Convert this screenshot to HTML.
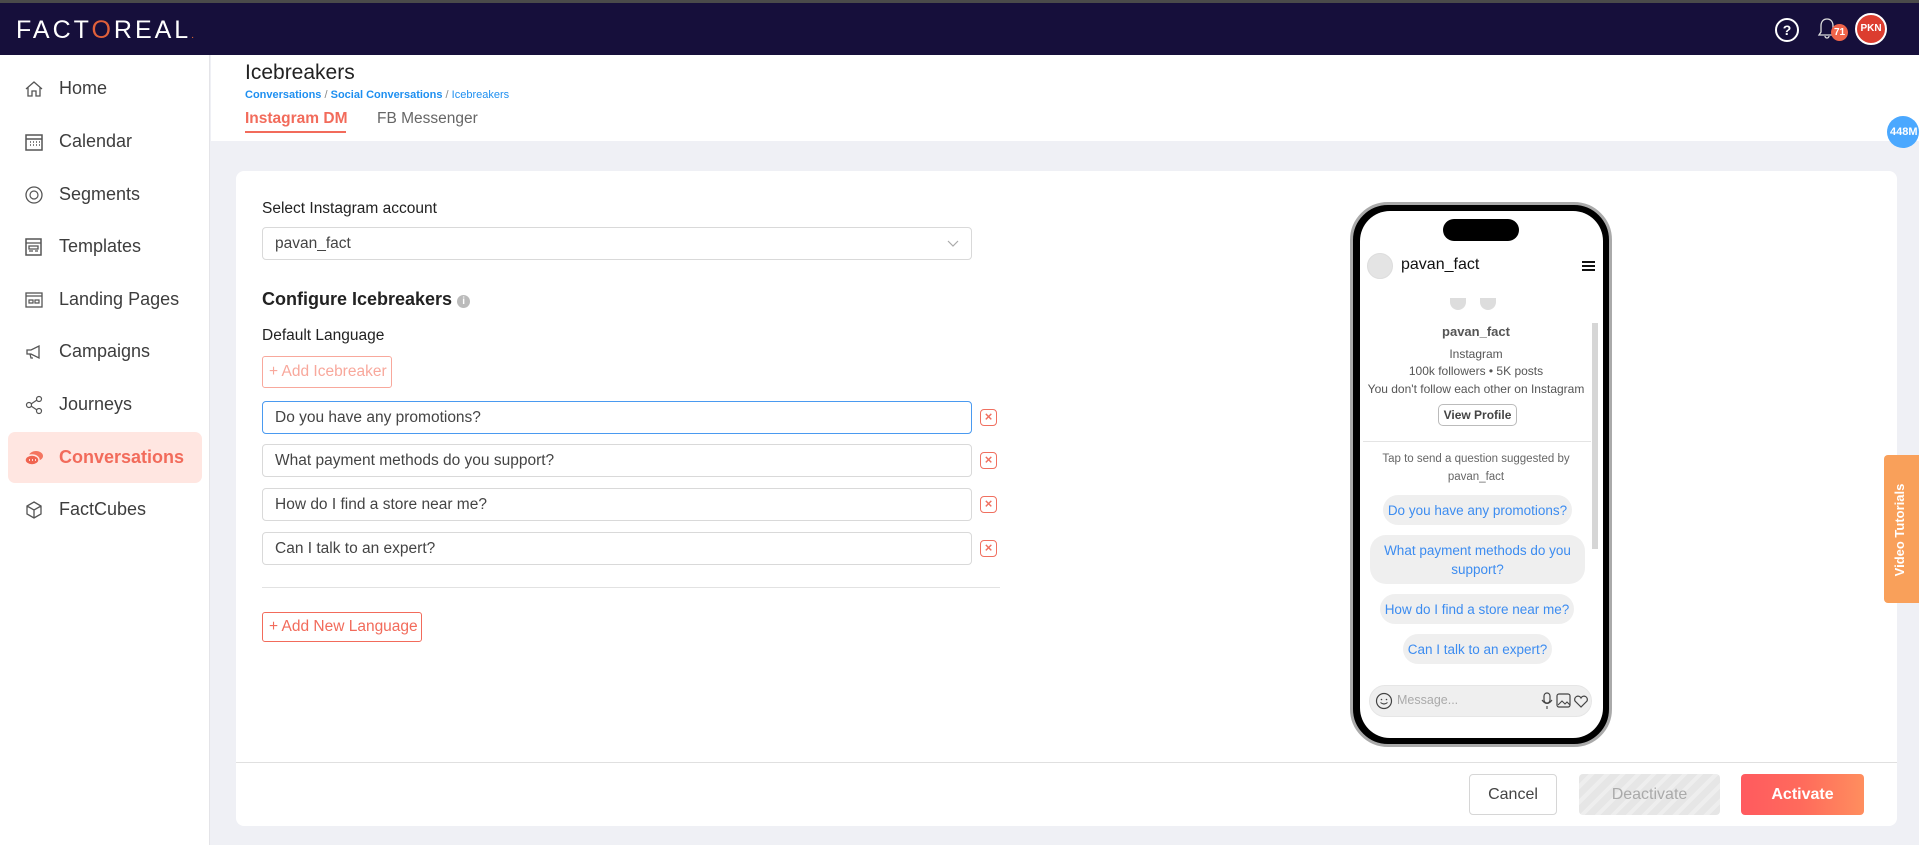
<!DOCTYPE html>
<html><head><meta charset="utf-8"><style>
*{box-sizing:border-box;margin:0;padding:0}
body{width:1919px;height:845px;overflow:hidden;background:#eff0f5;font-family:"Liberation Sans",Arial,sans-serif;position:relative;color:#222}
.abs{position:absolute}
.hdr{left:0;top:0;width:1919px;height:55px;background:#160f3b;border-top:3px solid #4a4a4a}
.side{left:0;top:55px;width:210px;height:790px;background:#fff;border-right:1px solid #e4e4e8}
.item{position:absolute;left:24px;font-size:18px;color:#3d3d3d;display:flex;align-items:center}
.item svg{position:absolute;left:0}
.item span{position:absolute;left:35px;white-space:nowrap}
.top{left:211px;top:55px;width:1708px;height:86px;background:#fff}
.card{left:236px;top:171px;width:1661px;height:655px;background:#fff;border-radius:8px}
.lbl{font-size:15.5px;color:#222}
.inp{position:absolute;left:262px;width:710px;height:33px;border:1px solid #d9d9d9;border-radius:4px;font-size:15.5px;color:#444;padding-left:12px;line-height:31px}
.x{position:absolute;left:980px;width:17px;height:17px;border:1.5px solid #f07060;border-radius:4px;color:#f07060;font-size:13px;line-height:13px;text-align:center;font-weight:bold}
.bub{position:absolute;background:#efefef;color:#3c8cf0;font-size:13.5px;text-align:center;border-radius:16px;display:flex;align-items:center;justify-content:center;line-height:19px}
</style></head><body>
<div class="abs hdr"></div>
<div class="abs" style="left:16px;top:16px;font-size:25px;color:#fff;letter-spacing:3px;font-weight:normal">FACT<span style="color:#e0603a">O</span>REAL<span style="color:#f07030;font-size:10px">.</span></div>
<svg class="abs" style="left:1774px;top:17px" width="26" height="26"><circle cx="13" cy="13" r="11" fill="none" stroke="#fff" stroke-width="2"/><text x="13" y="18" font-size="14" font-weight="bold" fill="#fff" text-anchor="middle" font-family="Liberation Sans">?</text></svg>
<svg class="abs" style="left:1817px;top:16px" width="20" height="24"><path d="M10 3c-4 0-6 3-6 7v6l-2 3h16l-2-3v-6c0-4-2-7-6-7z M8 20a2 2 0 0 0 4 0" fill="none" stroke="#ddd" stroke-width="1.3"/></svg>
<div class="abs" style="left:1831px;top:24px;width:17px;height:17px;border-radius:50%;background:#f0644a;color:#fff;font-size:10px;font-weight:bold;text-align:center;line-height:17px">71</div>
<div class="abs" style="left:1855px;top:13px;width:32px;height:32px;border-radius:50%;background:#dc3d2f;border:2px solid #fff;color:#fff;font-size:10px;font-weight:bold;text-align:center;line-height:28px">PKN</div>

<div class="abs side">
<div class="item" style="top:34px"><svg width="20" height="20" viewBox="0 0 20 20"><path d="M2 10L10 3l8 7M4 8v9h4v-5h4v5h4V8" fill="none" stroke="#555" stroke-width="1.3"/></svg><span style="top:-11px">Home</span></div>
<div class="item" style="top:87px"><svg width="20" height="20"><rect x="2" y="3" width="16" height="15" fill="none" stroke="#555" stroke-width="1.5"/><path d="M2 7h16M6 10h1M9 10h1M12 10h1M15 10h1M6 13h1M9 13h1M12 13h1M15 13h1" stroke="#555" stroke-width="1.5"/></svg><span style="top:-11px">Calendar</span></div>
<div class="item" style="top:140px"><svg width="20" height="20"><circle cx="10" cy="10" r="8" fill="none" stroke="#555" stroke-width="1.3"/><circle cx="10" cy="10" r="4" fill="none" stroke="#555" stroke-width="1.2"/></svg><span style="top:-11px">Segments</span></div>
<div class="item" style="top:192px"><svg width="20" height="20"><rect x="2" y="2" width="15" height="16" fill="none" stroke="#555" stroke-width="1.5"/><path d="M2 6h15M5 9h9v3H5zM5 14h4M11 14h3" fill="none" stroke="#555" stroke-width="1.3"/></svg><span style="top:-11px">Templates</span></div>
<div class="item" style="top:245px"><svg width="20" height="20"><rect x="2" y="3" width="16" height="14" fill="none" stroke="#555" stroke-width="1.3"/><path d="M2 6h16M5 10h4v3H5zM11 10h4v3h-4z" fill="none" stroke="#555" stroke-width="1.2"/></svg><span style="top:-11px">Landing Pages</span></div>
<div class="item" style="top:297px"><svg width="20" height="20"><path d="M3 8h4l8-4v12l-8-4H3zM6 12l1 4h2" fill="none" stroke="#555" stroke-width="1.3"/></svg><span style="top:-11px">Campaigns</span></div>
<div class="item" style="top:350px"><svg width="20" height="20"><circle cx="5" cy="10" r="2.5" fill="none" stroke="#555" stroke-width="1.2"/><circle cx="15" cy="4" r="2.5" fill="none" stroke="#555" stroke-width="1.2"/><circle cx="15" cy="16" r="2.5" fill="none" stroke="#555" stroke-width="1.2"/><path d="M7 9l6-4M7 11l6 4" stroke="#555" stroke-width="1.2"/></svg><span style="top:-11px">Journeys</span></div>
<div class="abs" style="left:8px;top:377px;width:194px;height:51px;background:#ffe6e1;border-radius:7px"></div>
<div class="item" style="top:403px"><svg width="20" height="20"><ellipse cx="12" cy="8" rx="7" ry="5" fill="#f47560"/><ellipse cx="8" cy="12" rx="7" ry="5" fill="#f06450" stroke="#ffe6e1" stroke-width="1.5"/><path d="M5 12h1M8 12h1M11 12h1" stroke="#fff" stroke-width="1.5"/></svg><span style="top:-11px;color:#f26b5b;font-weight:bold">Conversations</span></div>
<div class="item" style="top:455px"><svg width="20" height="20"><path d="M10 2l7 4v8l-7 4-7-4V6zM3 6l7 4 7-4M10 10v8" fill="none" stroke="#555" stroke-width="1.3"/></svg><span style="top:-11px">FactCubes</span></div>
</div>

<div class="abs top"></div>
<div class="abs" style="left:245px;top:61px;font-size:21px;color:#222">Icebreakers</div>
<div class="abs" style="left:245px;top:89px;font-size:11px;color:#1e8ff0"><b>Conversations</b> <span style="color:#888">/</span> <b>Social Conversations</b> <span style="color:#888">/</span> Icebreakers</div>
<div class="abs" style="left:245px;top:110px;font-size:15.5px;color:#f26b5b;font-weight:bold">Instagram DM</div>
<div class="abs" style="left:245px;top:131px;width:101px;height:2px;background:#f26b5b"></div>
<div class="abs" style="left:377px;top:110px;font-size:15.5px;color:#666">FB Messenger</div>
<div class="abs" style="left:1887px;top:116px;width:32px;height:32px;border-radius:50%;background:#4aa8ff;color:#fff;font-size:11px;font-weight:bold;line-height:32px;padding-left:3px">448M</div>

<div class="abs card"></div>
<div class="abs lbl" style="left:262px;top:200px">Select Instagram account</div>
<div class="inp" style="top:227px;height:33px">pavan_fact<svg class="abs" style="right:12px;top:12px" width="12" height="8"><path d="M1 1l5 5 5-5" fill="none" stroke="#aaa" stroke-width="1.2"/></svg></div>
<div class="abs" style="left:262px;top:289px;font-size:18px;font-weight:bold;color:#222">Configure Icebreakers <span style="display:inline-block;width:13px;height:13px;border-radius:50%;background:#bbb;color:#fff;font-size:10px;text-align:center;line-height:13px;vertical-align:1px">i</span></div>
<div class="abs lbl" style="left:262px;top:327px">Default Language</div>
<div class="abs" style="left:262px;top:356px;width:130px;height:32px;border:1px solid #f8a89c;border-radius:3px;color:#f8a89c;font-size:15.5px;line-height:30px;padding-left:6px">+ Add Icebreaker</div>
<div class="inp" style="top:401px;border-color:#4a9af0">Do you have any promotions?</div><div class="x" style="top:409px">×</div>
<div class="inp" style="top:444px">What payment methods do you support?</div><div class="x" style="top:452px">×</div>
<div class="inp" style="top:488px">How do I find a store near me?</div><div class="x" style="top:496px">×</div>
<div class="inp" style="top:532px">Can I talk to an expert?</div><div class="x" style="top:540px">×</div>
<div class="abs" style="left:262px;top:587px;width:738px;height:1px;background:#e2e2e2"></div>
<div class="abs" style="left:262px;top:612px;width:160px;height:30px;border:1px solid #f26b5b;border-radius:3px;color:#f26b5b;font-size:15.5px;line-height:28px;padding-left:6px">+ Add New Language</div>

<!-- phone -->
<div class="abs" style="left:1350px;top:202px;width:262px;height:545px;border-radius:38px;background:#000;border:3px solid #aaa"></div>
<div class="abs" style="left:1360px;top:211px;width:243px;height:527px;border-radius:30px;background:#fff;overflow:hidden">
 <div class="abs" style="left:83px;top:8px;width:76px;height:22px;border-radius:11px;background:#000"></div>
 <div class="abs" style="left:7px;top:42px;width:26px;height:26px;border-radius:50%;background:#e4e4e4;border:1px solid #ddd"></div>
 <div class="abs" style="left:41px;top:45px;font-size:16px;color:#111">pavan_fact</div>
 <div class="abs" style="left:222px;top:50px;width:13px;height:2px;background:#111;box-shadow:0 4px #111,0 8px #111"></div>
 <div class="abs" style="left:90px;top:87px;width:16px;height:12px;background:#ddd;border-radius:0 0 8px 8px"></div>
 <div class="abs" style="left:120px;top:87px;width:16px;height:12px;background:#ddd;border-radius:0 0 8px 8px"></div>
 <div class="abs" style="left:232px;top:112px;width:6px;height:226px;background:#d6d6d6"></div>
 <div style="position:absolute;left:0;width:232px;top:112px;text-align:center;font-size:12px;color:#555;line-height:17.5px"><b style="font-size:13px">pavan_fact</b><br><span style="display:block;margin-top:4px">Instagram<br>100k followers • 5K posts<br>You don't follow each other on Instagram</span></div>
 <div class="abs" style="left:78px;top:193px;width:79px;height:22px;border:1px solid #bbb;border-radius:5px;font-size:12px;font-weight:bold;color:#444;text-align:center;line-height:20px">View Profile</div>
 <div class="abs" style="left:3px;top:230px;width:228px;height:1px;background:#e4e4e4"></div>
 <div style="position:absolute;left:0;width:232px;top:239px;text-align:center;font-size:11.5px;color:#666;line-height:18px">Tap to send a question suggested by<br>pavan_fact</div>
 <div class="bub" style="left:23px;top:284px;width:189px;height:30px">Do you have any promotions?</div>
 <div class="bub" style="left:10px;top:324px;width:215px;height:49px">What payment methods do you<br>support?</div>
 <div class="bub" style="left:20px;top:383px;width:194px;height:30px">How do I find a store near me?</div>
 <div class="bub" style="left:43px;top:423px;width:149px;height:30px">Can I talk to an expert?</div>
 <div class="abs" style="left:9px;top:474px;width:223px;height:32px;border-radius:16px;background:#efefef;border:1px solid #e6e6e6"></div>
 <svg class="abs" style="left:15px;top:481px" width="18" height="18"><circle cx="9" cy="9" r="7.5" fill="none" stroke="#444" stroke-width="1.2"/><circle cx="6.5" cy="7.5" r="0.8" fill="#444"/><circle cx="11.5" cy="7.5" r="0.8" fill="#444"/><path d="M5.5 10.5q3.5 3 7 0" fill="none" stroke="#444" stroke-width="1.1"/></svg>
 <div class="abs" style="left:37px;top:482px;font-size:12.5px;color:#aaa">Message...</div>
 <svg class="abs" style="left:180px;top:481px" width="60" height="18"><rect x="4" y="1" width="6" height="10" rx="3" fill="none" stroke="#444" stroke-width="1.2"/><path d="M2 8q5 7 10 0M7 14v3" fill="none" stroke="#444" stroke-width="1.1"/><rect x="17" y="2" width="13" height="13" rx="2" fill="none" stroke="#444" stroke-width="1.2"/><path d="M18 13l4-4 3 3 2-2 3 3" fill="none" stroke="#444" stroke-width="1.1"/><path d="M41 15l-6-6a3.3 3.3 0 0 1 6-3 3.3 3.3 0 0 1 6 3z" fill="none" stroke="#444" stroke-width="1.2"/></svg>
</div>

<div class="abs" style="left:236px;top:762px;width:1661px;height:1px;background:#e0e0e0"></div>
<div class="abs" style="left:1469px;top:774px;width:88px;height:41px;border:1px solid #d6d6d6;border-radius:4px;font-size:16px;color:#444;text-align:center;line-height:39px">Cancel</div>
<div class="abs" style="left:1579px;top:774px;width:141px;height:41px;border-radius:4px;background:repeating-linear-gradient(135deg,#e6e6e6 0 7px,#eeeeee 7px 11px);font-size:16px;color:#aaa;text-align:center;line-height:41px">Deactivate</div>
<div class="abs" style="left:1741px;top:774px;width:123px;height:41px;border-radius:4px;background:linear-gradient(90deg,#ff5a5f,#ff6b5c 50%,#ff8e5e);font-size:16px;color:#fff;font-weight:bold;text-align:center;line-height:41px">Activate</div>

<div class="abs" style="left:1884px;top:455px;width:35px;height:148px;background:#f9a05a;border-radius:4px 0 0 4px"></div>
<div class="abs" style="left:1838px;top:520px;width:128px;height:20px;transform:rotate(-90deg);color:#fff;font-size:13px;font-weight:bold;text-align:center">Video Tutorials</div>
</body></html>
